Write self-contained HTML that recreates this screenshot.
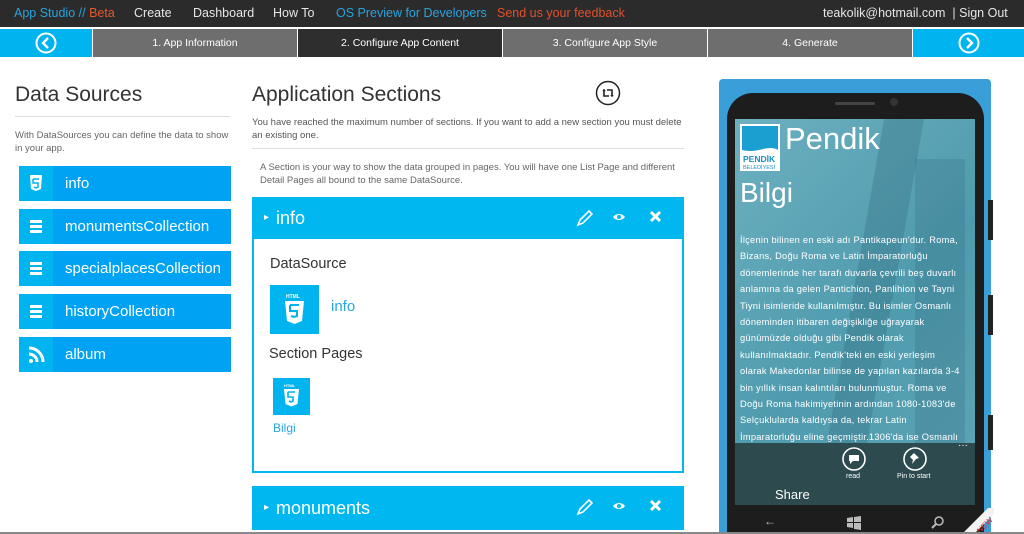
<!DOCTYPE html>
<html style="width:1024px;height:534px;overflow:hidden"><head><meta charset="utf-8"><style>
*{margin:0;padding:0;box-sizing:border-box}
body{width:1024px;height:534px;overflow:hidden;background:#fff;font-family:"Liberation Sans",sans-serif;position:relative}
.a{position:absolute}
.nav{left:0;top:0;width:1024px;height:27px;background:#2b2b2b;color:#e6e6e6;font-size:12.5px}
.nav span{position:absolute;top:6px}
.steps{left:0;top:27px;width:1024px;height:31px;background:#fff}
.st{position:absolute;top:2px;height:28px;color:#fff;font-size:10.5px;text-align:center;line-height:28px}
.ds{position:absolute;left:19px;width:212px;height:35px;background:#00a3f4;color:#fff;font-size:15px;line-height:35px}
.ds .ic{position:absolute;left:0;top:0;width:34px;height:35px;background:#00b4ef}
.ds .t{position:absolute;left:46px}
.hdr{position:absolute;left:252px;width:432px;height:42px;background:#00b7ef;color:#fff;font-size:18px;line-height:42px}
.ph{position:absolute;left:5px;top:113px;font-size:9.3px;line-height:16.4px;color:#fff;white-space:nowrap;letter-spacing:0.25px}
</style></head><body>
<div class="a nav">
<span style="left:14px;color:#29a3e0">App Studio // <span style="position:static;color:#e55a2b">Beta</span></span>
<span style="left:134px">Create</span>
<span style="left:193px">Dashboard</span>
<span style="left:273px">How To</span>
<span style="left:336px;color:#29a3e0">OS Preview for Developers</span>
<span style="left:497px;color:#e0502b">Send us your feedback</span>
<span style="left:823px">teakolik@hotmail.com &nbsp;| Sign Out</span>
</div>
<div class="a steps">
<div class="st" style="left:0;width:92px;background:#00b4ef"><svg width="22" height="22" style="margin-top:3px" viewBox="0 0 22 22"><circle cx="11" cy="11" r="9.5" fill="none" stroke="#fff" stroke-width="2"/><path d="M13 6l-5 5 5 5" stroke="#fff" stroke-width="2.4" fill="none"/></svg></div>
<div class="st" style="left:93px;width:204px;background:#6e6e6e">1. App Information</div>
<div class="st" style="left:298px;width:204px;background:#2e2e2e">2. Configure App Content</div>
<div class="st" style="left:503px;width:204px;background:#6e6e6e">3. Configure App Style</div>
<div class="st" style="left:708px;width:204px;background:#6e6e6e">4. Generate</div>
<div class="st" style="left:913px;width:111px;background:#00b4ef"><svg width="22" height="22" style="margin-top:3px" viewBox="0 0 22 22"><circle cx="11" cy="11" r="9.5" fill="none" stroke="#fff" stroke-width="2"/><path d="M9 6l5 5-5 5" stroke="#fff" stroke-width="2.4" fill="none"/></svg></div>
</div>

<div class="a" style="left:15px;top:83px;font-size:21px;color:#333">Data Sources</div>
<div class="a" style="left:15px;top:116px;width:215px;height:1px;background:#ddd"></div>
<div class="a" style="left:15px;top:129px;width:215px;font-size:9.5px;color:#666;line-height:13px">With DataSources you can define the data to show in your app.</div>

<div class="ds" style="top:166px"><div class="ic"><svg width="34" height="35" viewBox="0 0 34 35"><path d="M11 9h12l-1 14-5 2-5-2z" fill="#fff"/><path d="M14 13h6M14 13v4h5v4l-2 1-2-1" stroke="#00b4ef" stroke-width="1.5" fill="none"/></svg></div><span class="t">info</span></div>
<div class="ds" style="top:209px"><div class="ic"><svg width="34" height="35" viewBox="0 0 34 35"><rect x="11" y="11" width="12" height="3" fill="#fff"/><rect x="11" y="16" width="12" height="3" fill="#fff"/><rect x="11" y="21" width="12" height="3" fill="#fff"/></svg></div><span class="t">monumentsCollection</span></div>
<div class="ds" style="top:251px"><div class="ic"><svg width="34" height="35" viewBox="0 0 34 35"><rect x="11" y="11" width="12" height="3" fill="#fff"/><rect x="11" y="16" width="12" height="3" fill="#fff"/><rect x="11" y="21" width="12" height="3" fill="#fff"/></svg></div><span class="t">specialplacesCollection</span></div>
<div class="ds" style="top:294px"><div class="ic"><svg width="34" height="35" viewBox="0 0 34 35"><rect x="11" y="11" width="12" height="3" fill="#fff"/><rect x="11" y="16" width="12" height="3" fill="#fff"/><rect x="11" y="21" width="12" height="3" fill="#fff"/></svg></div><span class="t">historyCollection</span></div>
<div class="ds" style="top:337px"><div class="ic"><svg width="34" height="35" viewBox="0 0 34 35"><circle cx="12" cy="24" r="2" fill="#fff"/><path d="M10 17a8 8 0 0 1 8 8M10 11a14 14 0 0 1 14 14" stroke="#fff" stroke-width="3" fill="none"/></svg></div><span class="t">album</span></div>

<div class="a" style="left:252px;top:83px;font-size:21px;color:#333">Application Sections</div>
<svg class="a" style="left:595px;top:80px" width="26" height="26" viewBox="0 0 26 26"><circle cx="13" cy="13" r="11.5" fill="#fff" stroke="#222" stroke-width="1.5"/><path d="M9 10v6h5M17 16v-6h-5M8 11l1-1 1 1M16 15l1 1 1-1" stroke="#222" stroke-width="1.6" fill="none"/></svg>
<div class="a" style="left:252px;top:116px;width:440px;font-size:9.5px;color:#555;line-height:13px">You have reached the maximum number of sections. If you want to add a new section you must delete an existing one.</div>
<div class="a" style="left:252px;top:148px;width:432px;height:1px;background:#ddd"></div>
<div class="a" style="left:260px;top:161px;width:420px;font-size:9.5px;color:#666;line-height:13px">A Section is your way to show the data grouped in pages. You will have one List Page and different Detail Pages all bound to the same DataSource.</div>

<div class="hdr" style="top:197px"><span style="position:absolute;left:12px;font-size:10px">&#9656;</span><span style="position:absolute;left:24px">info</span></div>
<div class="a" style="left:252px;top:238px;width:432px;height:235px;border:2px solid #00b7ef;border-top:none"></div>
<div class="a" style="left:270px;top:256px;font-size:14.5px;color:#333">DataSource</div>
<div class="a" style="left:270px;top:285px;width:49px;height:49px;background:#00b4ef"><svg width="49" height="49" viewBox="0 0 49 49"><text x="16" y="13" font-size="5" fill="#fff" font-family="Liberation Sans" font-weight="bold">HTML</text><path d="M15 16h19l-2 20-7.5 3-7.5-3z" fill="#fff"/><path d="M20 20h9M20 20v6h7v5l-3 1-3-1" stroke="#00b4ef" stroke-width="2" fill="none"/></svg></div>
<div class="a" style="left:331px;top:298px;font-size:15px;color:#29a8e0">info</div>
<div class="a" style="left:269px;top:346px;font-size:14.5px;color:#333">Section Pages</div>
<div class="a" style="left:273px;top:378px;width:37px;height:37px;background:#00b4ef"><svg width="37" height="37" viewBox="0 0 37 37"><text x="11" y="9" font-size="4" fill="#fff" font-family="Liberation Sans" font-weight="bold">HTML</text><path d="M11 11h15l-1.5 15-6 2.5-6-2.5z" fill="#fff"/><path d="M15 14h7M15 14v5h5v4l-2 1-2-1" stroke="#00b4ef" stroke-width="1.6" fill="none"/></svg></div>
<div class="a" style="left:273px;top:421px;font-size:12px;color:#29a8e0">Bilgi</div>

<div class="hdr" style="top:486px;height:44px;line-height:44px"><span style="position:absolute;left:12px;font-size:10px">&#9656;</span><span style="position:absolute;left:24px">monuments</span></div>
<svg class="a" style="left:570px;top:207px" width="100" height="22" viewBox="0 0 100 22"><path d="M8 18l2-5 9-9 3 3-9 9z" stroke="#fff" stroke-width="1.6" fill="none"/><path d="M43 10c3-4 9-4 12 0c-3 4-9 4-12 0z" fill="#fff"/><circle cx="49" cy="10" r="2" fill="#00b7ef"/><path d="M81 5l9 9M90 5l-9 9" stroke="#fff" stroke-width="3"/></svg>
<svg class="a" style="left:570px;top:496px" width="100" height="22" viewBox="0 0 100 22"><path d="M8 18l2-5 9-9 3 3-9 9z" stroke="#fff" stroke-width="1.6" fill="none"/><path d="M43 10c3-4 9-4 12 0c-3 4-9 4-12 0z" fill="#fff"/><circle cx="49" cy="10" r="2" fill="#00b7ef"/><path d="M81 5l9 9M90 5l-9 9" stroke="#fff" stroke-width="3"/></svg>

<!-- phone -->
<div class="a" style="left:719px;top:79px;width:272px;height:455px;background:#3a9fd8;border-radius:4px 4px 0 0"></div>
<div class="a" style="left:988px;top:200px;width:5px;height:40px;background:#222"></div>
<div class="a" style="left:988px;top:295px;width:5px;height:40px;background:#222"></div>
<div class="a" style="left:988px;top:415px;width:5px;height:35px;background:#222"></div>
<div class="a" style="left:727px;top:93px;width:257px;height:441px;background:#1d1d1d;border-radius:26px 26px 0 0"></div>
<div class="a" style="left:835px;top:102px;width:40px;height:3px;background:#444;border-radius:2px"></div>
<div class="a" style="left:890px;top:98px;width:8px;height:8px;background:#333;border-radius:50%"></div>
<div class="a" style="left:735px;top:119px;width:240px;height:324px;background:linear-gradient(135deg,#6db0c0,#4f9bae 60%,#5aa3b4);overflow:hidden">
<div style="position:absolute;left:120px;top:0;width:40px;height:330px;background:rgba(40,90,110,.25);transform:skewX(-10deg)"></div>
<div style="position:absolute;left:180px;top:40px;width:50px;height:290px;background:rgba(40,90,110,.2)"></div>
<div style="position:absolute;left:5px;top:5px;width:40px;height:47px;background:#fff"><svg width="40" height="47" viewBox="0 0 40 47"><path d="M2 2h36v24c-10-6-20 4-36 0z" fill="#1a9fd0"/><text x="3" y="38" font-size="8.5" font-weight="bold" fill="#1a8fc8" font-family="Liberation Sans">PENDİK</text><text x="3" y="45" font-size="5.5" fill="#1a8fc8" font-family="Liberation Sans">BELEDİYESİ</text></svg></div>
<div style="position:absolute;left:50px;top:2px;font-size:31px;color:#fff">Pendik</div>
<div style="position:absolute;left:5px;top:58px;font-size:28px;color:#fff">Bilgi</div>
<div class="ph">İlçenin bilinen en eski adı Pantikapeun'dur. Roma,<br>Bizans, Doğu Roma ve Latin İmparatorluğu<br>dönemlerinde her tarafı duvarla çevrili beş duvarlı<br>anlamına da gelen Pantichion, Panlihion ve Tayni<br>Tiyni isimleride kullanılmıştır. Bu isimler Osmanlı<br>döneminden itibaren değişikliğe uğrayarak<br>günümüzde olduğu gibi Pendik olarak<br>kullanılmaktadır. Pendik'teki en eski yerleşim<br>olarak Makedonlar bilinse de yapılan kazılarda 3-4<br>bin yıllık insan kalıntıları bulunmuştur. Roma ve<br>Doğu Roma hakimiyetinin ardından 1080-1083'de<br>Selçuklularda kaldıysa da, tekrar Latin<br>İmparatorluğu eline geçmiştir.1306'da ise Osmanlı</div>
</div>
<div class="a" style="left:735px;top:443px;width:240px;height:62px;background:#2d4a4f"></div>
<div class="a" style="left:958px;top:440px;color:#fff;font-size:10px">···</div>
<svg class="a" style="left:841px;top:446px" width="26" height="26" viewBox="0 0 26 26"><circle cx="13" cy="13" r="11" fill="none" stroke="#fff" stroke-width="1.6"/><path d="M8 9h10v6h-6l-3 3v-3h-1z" fill="#fff"/></svg>
<svg class="a" style="left:902px;top:446px" width="26" height="26" viewBox="0 0 26 26"><circle cx="13" cy="13" r="11" fill="none" stroke="#fff" stroke-width="1.6"/><path d="M12 7l5 5-3 1-4 5 1-4-3-3z" fill="#fff"/></svg>
<div class="a" style="left:846px;top:473px;font-size:7px;color:#fff">read</div>
<div class="a" style="left:897px;top:473px;font-size:7px;color:#fff">Pin to start</div>
<div class="a" style="left:775px;top:487px;font-size:13px;color:#fff">Share</div>
<div class="a" style="left:764px;top:514px;color:#bbb;font-size:12px">&#8592;</div>
<svg class="a" style="left:847px;top:516px" width="14" height="14" viewBox="0 0 14 14"><path d="M0 2l6-1v5H0zM7 1l7-1v6H7zM0 7h6v5l-6-1zM7 7h7v7l-7-1z" fill="#bbb"/></svg>
<svg class="a" style="left:931px;top:515px" width="14" height="14" viewBox="0 0 14 14"><circle cx="8" cy="6" r="4" fill="none" stroke="#bbb" stroke-width="1.5"/><path d="M5 9l-4 4" stroke="#bbb" stroke-width="2"/></svg>
<svg class="a" style="left:962px;top:508px" width="32" height="26" viewBox="0 0 32 26"><path d="M0 26L26 0h6v6L12 26z" fill="#f2f2f2"/><text x="14" y="24" font-size="8" fill="#d33" transform="rotate(-45 18 20)" font-family="Liberation Sans">NEW</text></svg>
<div class="a" style="left:0;top:532px;width:1024px;height:2px;background:#888"></div>
</body></html>
